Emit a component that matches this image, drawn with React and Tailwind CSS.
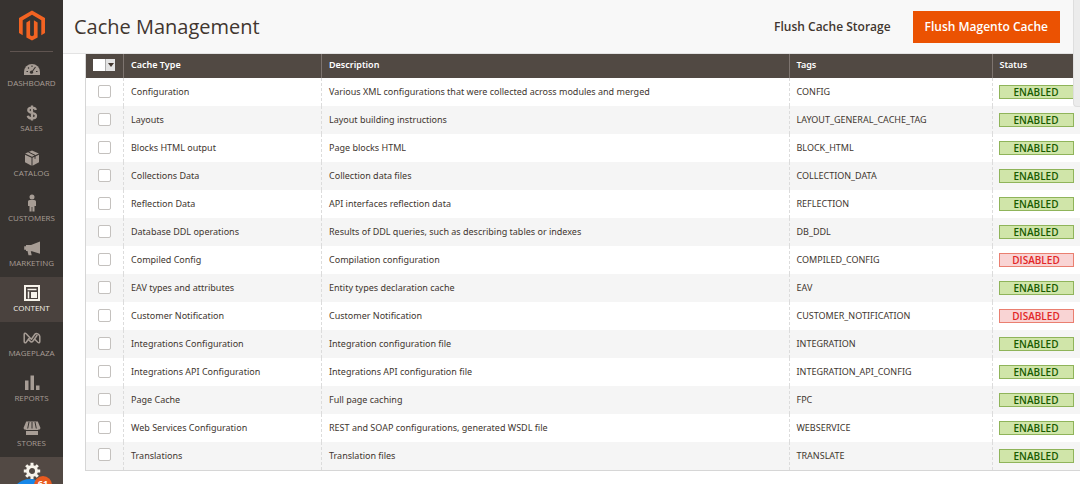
import React, { useState } from 'react';

const caches = [
  { type: "Configuration", description: "Various XML configurations that were collected across modules and merged", tags: "CONFIG", enabled: true },
  { type: "Layouts", description: "Layout building instructions", tags: "LAYOUT_GENERAL_CACHE_TAG", enabled: true },
  { type: "Blocks HTML output", description: "Page blocks HTML", tags: "BLOCK_HTML", enabled: true },
  { type: "Collections Data", description: "Collection data files", tags: "COLLECTION_DATA", enabled: true },
  { type: "Reflection Data", description: "API interfaces reflection data", tags: "REFLECTION", enabled: true },
  { type: "Database DDL operations", description: "Results of DDL queries, such as describing tables or indexes", tags: "DB_DDL", enabled: true },
  { type: "Compiled Config", description: "Compilation configuration", tags: "COMPILED_CONFIG", enabled: false },
  { type: "EAV types and attributes", description: "Entity types declaration cache", tags: "EAV", enabled: true },
  { type: "Customer Notification", description: "Customer Notification", tags: "CUSTOMER_NOTIFICATION", enabled: false },
  { type: "Integrations Configuration", description: "Integration configuration file", tags: "INTEGRATION", enabled: true },
  { type: "Integrations API Configuration", description: "Integrations API configuration file", tags: "INTEGRATION_API_CONFIG", enabled: true },
  { type: "Page Cache", description: "Full page caching", tags: "FPC", enabled: true },
  { type: "Web Services Configuration", description: "REST and SOAP configurations, generated WSDL file", tags: "WEBSERVICE", enabled: true },
  { type: "Translations", description: "Translation files", tags: "TRANSLATE", enabled: true },
];

// Sidebar glyphs, all on an 18x18 grid
const icons = {
  dashboard: (
    <>
      <path fill="currentColor" d="M1 16v-3a8 8 0 0 1 16 0v3z" />
      <path d="M8.5 13.5 12.5 8M3.5 12.5H5M13 12.5h1.5M5 8.5l1 1M9 6.5V8" stroke="#373330" strokeWidth="1.1" fill="none" />
      <circle cx="8.5" cy="13.2" r="1.6" fill="#373330" />
    </>
  ),
  sales: (
    <path
      d="M12.8 6C12.5 4.500 11 3.700 9 3.700c-2.200 0-3.700.9-3.700 2.500C5.300 9.800 13 8 13 11.700c0 1.700-1.600 2.700-4 2.700-2.300 0-3.900-1-4.200-2.700M9 1.500v15"
      stroke="currentColor" strokeWidth="2.3" fill="none"
    />
  ),
  catalog: (
    <>
      <path fill="currentColor" d="M9 1.5 15.800 4.600 9 7.800 2.200 4.600z" />
      <path fill="currentColor" d="M2 5.700l6.500 3v8L2 13.200zM16 5.700l-6.500 3v8l6.500-3.500z" />
      <path d="M5.300 3 12 6.300v3.500" stroke="#373330" strokeWidth="1" fill="none" />
    </>
  ),
  customers: (
    <>
      <circle cx="9" cy="3" r="2.5" fill="currentColor" />
      <path fill="currentColor" d="M6.800 6h4.400c1.100 0 1.800.7 1.800 1.800V12h-1.500v5.500H9.400V13h-.8v4.500H6.500V12H5V7.800C5 6.700 5.700 6 6.800 6z" />
    </>
  ),
  marketing: (
    <path fill="currentColor" d="M17 2.500v12.300l-8-2.500H7.800l.9 4H5.500l-1-4.200H3v-1.300H1.200V7.200H3V6h5z" />
  ),
  content: (
    <>
      <path d="M2 2h14v14H2z" stroke="currentColor" strokeWidth="2" fill="none" />
      <path d="M4.500 5.500h9M5.500 7.500v7" stroke="currentColor" strokeWidth="1.5" fill="none" />
      <path d="M8 8h6v6H8z" fill="currentColor" />
    </>
  ),
  mageplaza: (
    <path
      d="M6.700 8.500 3.200 4.700C2.200 3.800 1.200 4.300 1.200 5.500v7c0 1.200 1.200 1.700 2 .7l3.500-4.700 1.700 1.800 3.500-5c.8-1.100 2-.9 2.900-.4 1.300.7 2 1.200 2 2.600v5c0 1.200-1 1.700-2 .8L11.500 10l-1.700 2.300c-.8 1-1.800 1-2.600 0l-1.500-1.800M11.500 10l2.800-4"
      stroke="currentColor" strokeWidth="1.5" fill="none" strokeLinejoin="round"
    />
  ),
  reports: (
    <path fill="currentColor" d="M2 6.500h3.500V16H2zM7.500 1.500H11V16H7.500zM13 11.500h3.500V16H13z" />
  ),
  stores: (
    <>
      <path fill="currentColor" d="M3.200 2.500h11.600L17.500 9a2 2 0 0 1-2.500 1.500V16H3v-5.500A2 2 0 0 1 .5 9z" />
      <path d="M6 3 4.700 9.500M9 3v6.500M12 3l1.300 6.500M3 11.500h12" stroke="#373330" strokeWidth="1" />
    </>
  ),
  system: (
    <>
      <circle cx="9" cy="9" r="4.5" stroke="currentColor" strokeWidth="3" fill="none" />
      <path
        d="M9 .8v3M9 14.200v3M.8 9h3M14.200 9h3M3.200 3.200l2.100 2.100M12.700 12.700l2.100 2.100M3.200 14.800l2.100-2.100M12.700 5.300l2.100-2.100"
        stroke="currentColor" strokeWidth="3"
      />
    </>
  ),
};

const menu = [
  { id: "dashboard", label: "Dashboard" },
  { id: "sales", label: "Sales" },
  { id: "catalog", label: "Catalog" },
  { id: "customers", label: "Customers" },
  { id: "marketing", label: "Marketing" },
  { id: "content", label: "Content" },
  { id: "mageplaza", label: "Mageplaza" },
  { id: "reports", label: "Reports" },
  { id: "stores", label: "Stores" },
];

function MenuIcon({ id }) {
  return (
    <svg viewBox="0 0 18 18" className="size-[18px]" aria-hidden="true">
      {icons[id]}
    </svg>
  );
}

function Sidebar({ active, onSelect }) {
  return (
    <aside className="flex w-[63px] shrink-0 flex-col overflow-hidden bg-[#373330]">
      <div className="mx-[10px] flex h-[52px] shrink-0 justify-center border-b border-[#5f5450] pt-[10px]">
        <svg viewBox="0 0 26 30" className="h-[31px] w-[26px]" role="img" aria-label="Magento">
          <path fill="#f26322" d="M13 0 0 7.500v15l3.700 2.200v-15L13 4.300l9.300 5.400v15l3.700-2.200v-15z" />
          <path fill="#f26322" d="M14.900 24.700 13 25.800l-1.900-1.100v-15L7.400 11.900v15L13 30l5.600-3.100v-15l-3.700-2.200z" />
        </svg>
      </div>
      <nav className="flex flex-col">
        {menu.map((item) => (
          <a key={item.id} href={`#${item.id}`} onClick={() => onSelect(item.id)}
            className={`flex h-[45px] shrink-0 flex-col items-center pt-[7px] text-[8px] leading-3 uppercase
              ${active === item.id ? "bg-[#4a423e] text-[#f7f3eb]" : "text-[#a79d95] hover:bg-[#4a423e]"}`}>
            <MenuIcon id={item.id} />
            {item.label}
          </a>
        ))}
        <a href="#system" aria-label="System"
          className="relative flex h-[45px] shrink-0 flex-col items-center bg-[#524944] pt-[5px] text-[#f7f3eb]">
          <MenuIcon id="system" />
          <span className="absolute top-[22px] left-[11px] size-[38px] rounded-full bg-[#1787e8]" />
          <span className="absolute top-[19px] left-[34px] size-[18px] rounded-full bg-[#e85a1f] text-center text-[9px] leading-4 font-bold text-white">
            61
          </span>
        </a>
      </nav>
    </aside>
  );
}

function Status({ enabled }) {
  return (
    <span className={`block h-[14px] w-[75px] border text-center font-['Open_Sans',sans-serif] text-[10px] leading-3 font-semibold
      ${enabled ? "border-[#8fb45a] bg-[#d0e5a9] text-[#185b00]" : "border-[#ea7f70] bg-[#f9d4d4] text-[#e22626]"}`}>
      {enabled ? "ENABLED" : "DISABLED"}
    </span>
  );
}

function App() {
  const [active, setActive] = useState("content");
  const [selected, setSelected] = useState([]);

  const toggle = (type) => {
    setSelected(selected.includes(type) ? selected.filter((t) => t !== type) : [...selected, type]);
  };

  const toggleAll = () => {
    setSelected(selected.length === caches.length ? [] : caches.map((c) => c.type));
  };

  const headCell = "border-l border-[#7d746f] px-[7px] pb-0.5 text-left font-semibold";
  const cell = "border-l border-dashed border-[#dcdcdc] px-[7px]";

  return (
    <div className="relative flex h-screen overflow-hidden bg-white font-['Open_Sans','Noto_Sans',sans-serif] text-[#41362f]">
      <Sidebar active={active} onSelect={setActive} />

      <main className="min-w-0 flex-1">
        <header className="flex h-[54px] items-center justify-between border-b border-[#e3e3e3] bg-[#f8f8f8] pr-5 pl-[11px]">
          <h1 className="text-[20px] leading-8">Cache Management</h1>
          <div className="flex items-center gap-[10px]">
            <button type="button" className="h-8 px-3 text-[12px] font-semibold">Flush Cache Storage</button>
            <button type="button" className="h-8 bg-[#eb5202] px-3 text-[12px] font-semibold text-white">Flush Magento Cache</button>
          </div>
        </header>

        <div className="pl-[22px]">
          <table className="w-full table-fixed border-collapse border-b border-l border-[#d6d6d6] font-['Noto_Sans',sans-serif] text-[9px] leading-4">
            <colgroup>
              <col className="w-[38px]" />
              <col className="w-[198px]" />
              <col />
              <col className="w-[203px]" />
              <col className="w-[88px]" />
            </colgroup>
            <thead>
              <tr className="h-6 bg-[#514943] text-white">
                <th className="pb-0.5">
                  <div className="ml-[7px] flex h-3 w-[22px] bg-white">
                    <input type="checkbox" aria-label="Select all" onChange={toggleAll}
                      checked={selected.length === caches.length}
                      className="block size-3 appearance-none bg-white checked:bg-[#adadad]" />
                    <button type="button" aria-label="Selection options"
                      className="flex h-3 w-[10px] items-center justify-center border-l border-[#adadad] bg-[#e3e3e3]">
                      <svg viewBox="0 0 6 4" className="h-1 w-1.5"><path fill="#41362f" d="M0 0h6L3 4z" /></svg>
                    </button>
                  </div>
                </th>
                <th className={headCell}>Cache Type</th>
                <th className={headCell}>Description</th>
                <th className={headCell}>Tags</th>
                <th className={headCell}>Status</th>
              </tr>
            </thead>
            <tbody>
              {caches.map((cache) => (
                <tr key={cache.type} className="h-[28px] even:bg-[#f5f5f5]">
                  <td className="pb-0.5">
                    <input type="checkbox" aria-label={cache.type} checked={selected.includes(cache.type)}
                      onChange={() => toggle(cache.type)}
                      className="mx-auto block size-[13px] appearance-none rounded-xs border border-[#c4c1be] bg-white checked:bg-[#514943]" />
                  </td>
                  <td className={cell}>{cache.type}</td>
                  <td className={cell}>{cache.description}</td>
                  <td className={cell}>{cache.tags}</td>
                  <td className="border-l border-dashed border-[#dcdcdc] px-1.5"><Status enabled={cache.enabled} /></td>
                </tr>
              ))}
            </tbody>
          </table>
        </div>
      </main>

      {/* scroll thumb */}
      <div className="absolute top-0 right-0 h-[107px] w-[7px] rounded-bl-sm border-b border-l border-[#dedede] bg-[#ececec]" />
    </div>
  );
}

export default App;
